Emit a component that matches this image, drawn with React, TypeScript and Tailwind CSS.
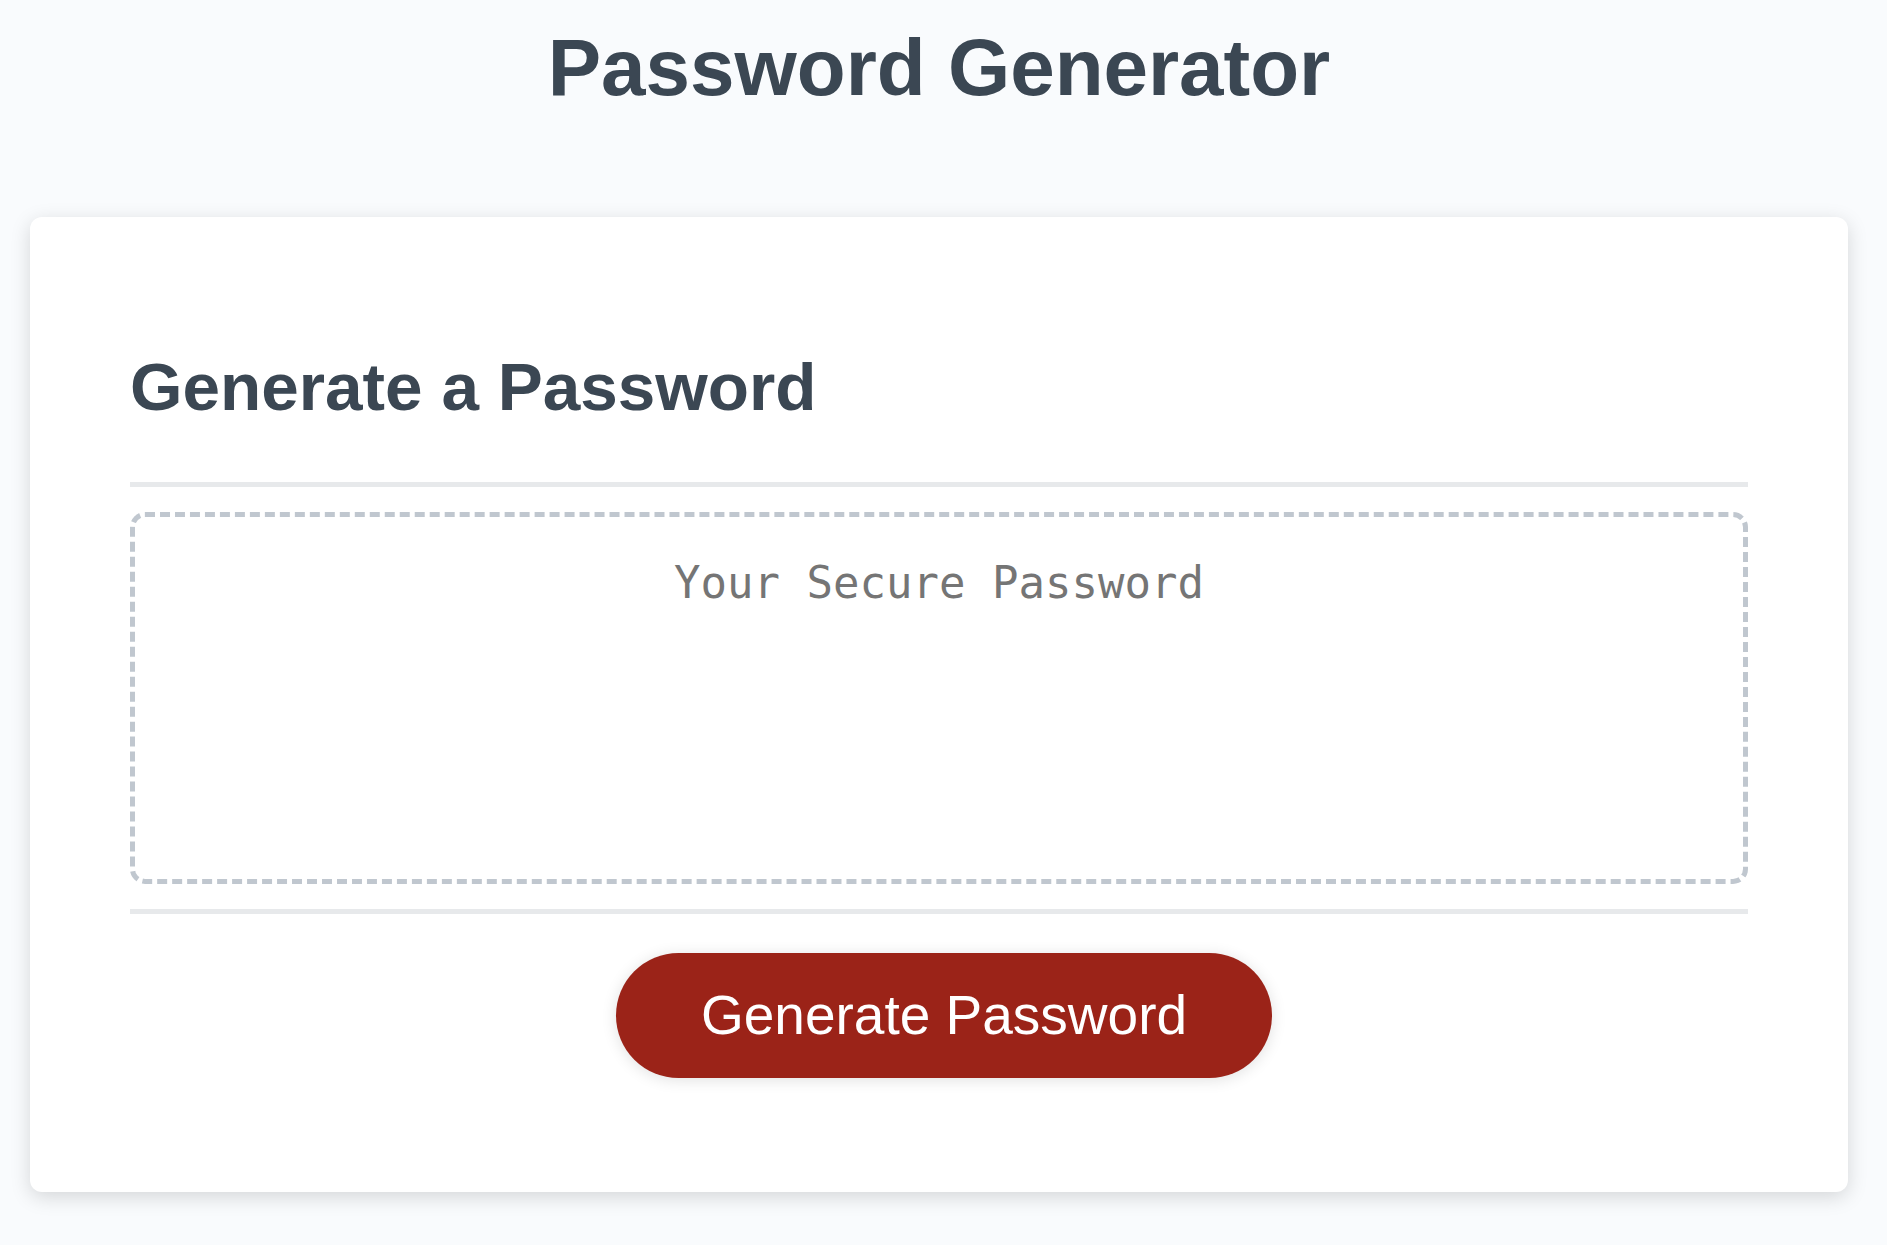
export default function App() {
  return (
    <div className="min-h-[1245px] bg-[#f9fbfd] pl-[30px] pr-[39px] pt-[22px] pb-[52px] text-[#3b4753] [font-family:'Liberation_Sans',Arial,sans-serif]">
      <header className="mb-[103px] text-center">
        <h1 className="text-[80px] font-bold leading-[92px]">Password Generator</h1>
      </header>
      <div className="rounded-[12px] bg-white px-[100px] pt-[75px] pb-[75px] shadow-[0_5px_20px_rgba(0,0,0,0.15)]">
        <div>
          <h2 className="mt-[56px] mb-[56px] text-[67.5px] font-bold leading-[78px]">Generate a Password</h2>
          <div className="h-[5px] w-full bg-[#e7e9eb]" />
        </div>
        <div className="mt-[25px] mb-[25px] h-[372px] rounded-[15px] border-[5px] border-dashed border-[#c0c7cf] px-[37px] pt-[40px] text-center">
          <span className="text-[44px] leading-[51px] text-[#757575] [font-family:'DejaVu_Sans_Mono','Liberation_Mono',monospace]">
            Your Secure Password
          </span>
        </div>
        <div>
          <div className="h-[5px] w-full bg-[#e7e9eb]" />
          <div className="flex justify-center">
            <button className="mt-[39px] mb-[39px] ml-[50px] mr-[40px] rounded-full bg-[#9b2318] px-[85px] py-[35px] text-[55px] leading-[55px] text-white shadow-[0_2px_15px_rgba(0,0,0,0.12)]">
              Generate Password
            </button>
          </div>
        </div>
      </div>
    </div>
  );
}
